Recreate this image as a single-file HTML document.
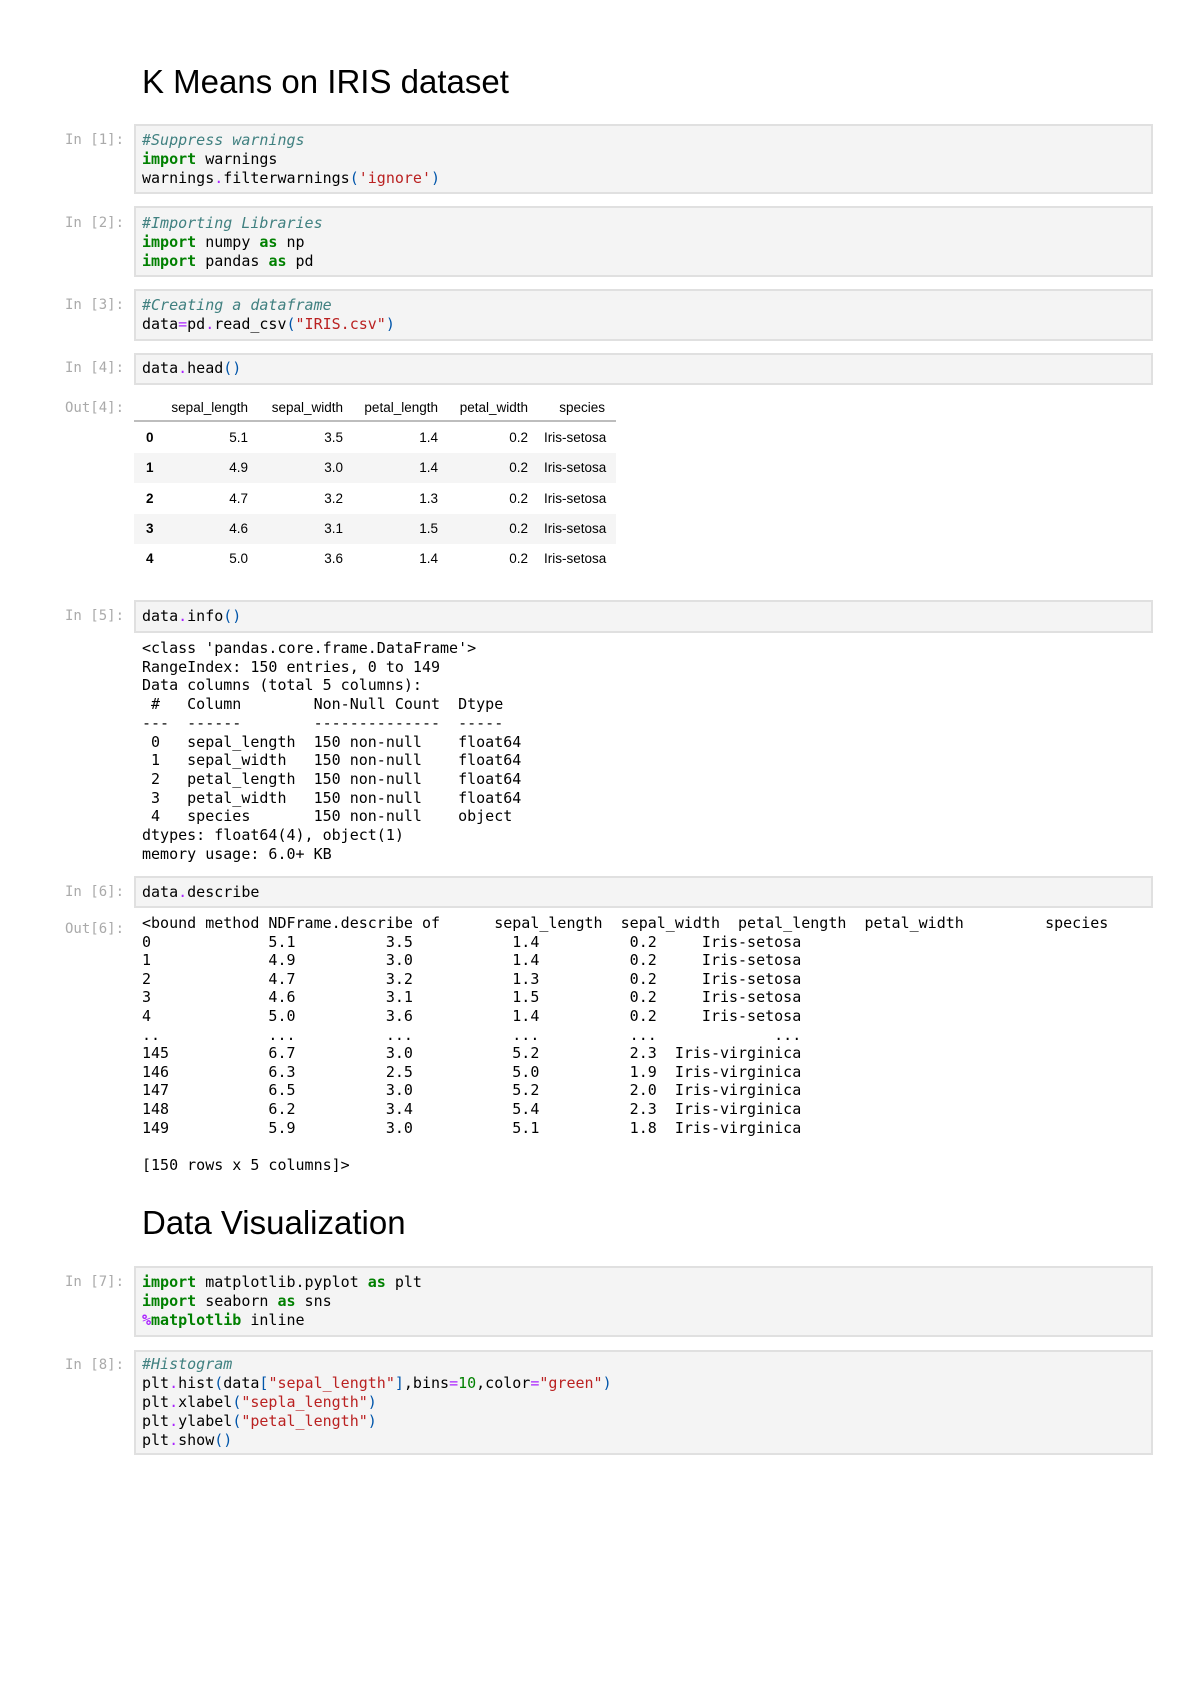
<!DOCTYPE html>
<html><head><meta charset="utf-8"><style>
body{margin:0;width:1200px;height:1698px;background:#fff;position:relative;overflow:hidden}
.h{position:absolute;left:142px;font-family:"Liberation Sans",sans-serif;font-size:33px;color:#000;margin:0;font-weight:normal;line-height:40px}
.cell{position:absolute;left:134px;width:1019px;background:#f4f4f4;border:2px solid #e0e0e0;box-sizing:border-box}
pre{margin:0;font-family:"DejaVu Sans Mono","Liberation Mono",monospace;font-size:15px;line-height:19px;color:#000}
.code{position:absolute;left:142px}
.lbl{position:absolute;left:65px;font-family:"DejaVu Sans Mono",monospace;font-size:14px;color:#aaa;line-height:19px}
.c{color:#408080;font-style:italic}.k{color:#008000;font-weight:bold}.s{color:#ba2121}.o{color:#aa22ff}.p{color:#0055aa}.n{color:#008000}.m{color:#aa22ff;font-weight:bold}
.t{position:absolute;font-family:"Liberation Sans",sans-serif;font-size:13.5px;color:#000;line-height:16px}
.r{text-align:right}
.stripe{position:absolute;left:134px;width:482px;height:30px;background:#f5f5f5}
</style></head><body>

<div class="h" style="top:62px">K Means on IRIS dataset</div>

<div class="lbl" style="top:131px">In [1]:</div>
<div class="cell" style="top:124px;height:70px"></div>
<pre class="code" style="top:131px"><span class="c">#Suppress warnings</span>
<span class="k">import</span> warnings
warnings<span class="o">.</span>filterwarnings<span class="p">(</span><span class="s">'ignore'</span><span class="p">)</span></pre>

<div class="lbl" style="top:214px">In [2]:</div>
<div class="cell" style="top:206px;height:71px"></div>
<pre class="code" style="top:214px"><span class="c">#Importing Libraries</span>
<span class="k">import</span> numpy <span class="k">as</span> np
<span class="k">import</span> pandas <span class="k">as</span> pd</pre>

<div class="lbl" style="top:296px">In [3]:</div>
<div class="cell" style="top:289px;height:52px"></div>
<pre class="code" style="top:296px"><span class="c">#Creating a dataframe</span>
data<span class="o">=</span>pd<span class="o">.</span>read_csv<span class="p">(</span><span class="s">"IRIS.csv"</span><span class="p">)</span></pre>

<div class="lbl" style="top:359px">In [4]:</div>
<div class="cell" style="top:353px;height:32px"></div>
<pre class="code" style="top:359px">data<span class="o">.</span>head<span class="p">()</span></pre>

<div class="lbl" style="top:399px">Out[4]:</div>
<div style="position:absolute;left:134px;top:420px;width:482px;height:2px;background:#bdbdbd"></div>
<div class="stripe" style="top:453px"></div>
<div class="stripe" style="top:514px"></div>
<div class="t r" style="top:400px;left:140px;width:108px">sepal_length</div>
<div class="t r" style="top:400px;left:240px;width:103px">sepal_width</div>
<div class="t r" style="top:400px;left:330px;width:108px">petal_length</div>
<div class="t r" style="top:400px;left:430px;width:98px">petal_width</div>
<div class="t r" style="top:400px;left:530px;width:75px">species</div>

<div class="t" style="top:430px;left:146px;font-weight:bold">0</div>
<div class="t r" style="top:430px;left:200px;width:48px">5.1</div><div class="t r" style="top:430px;left:300px;width:43px">3.5</div><div class="t r" style="top:430px;left:390px;width:48px">1.4</div><div class="t r" style="top:430px;left:480px;width:48px">0.2</div><div class="t" style="top:430px;left:544px">Iris-setosa</div>
<div class="t" style="top:460px;left:146px;font-weight:bold">1</div>
<div class="t r" style="top:460px;left:200px;width:48px">4.9</div><div class="t r" style="top:460px;left:300px;width:43px">3.0</div><div class="t r" style="top:460px;left:390px;width:48px">1.4</div><div class="t r" style="top:460px;left:480px;width:48px">0.2</div><div class="t" style="top:460px;left:544px">Iris-setosa</div>
<div class="t" style="top:491px;left:146px;font-weight:bold">2</div>
<div class="t r" style="top:491px;left:200px;width:48px">4.7</div><div class="t r" style="top:491px;left:300px;width:43px">3.2</div><div class="t r" style="top:491px;left:390px;width:48px">1.3</div><div class="t r" style="top:491px;left:480px;width:48px">0.2</div><div class="t" style="top:491px;left:544px">Iris-setosa</div>
<div class="t" style="top:521px;left:146px;font-weight:bold">3</div>
<div class="t r" style="top:521px;left:200px;width:48px">4.6</div><div class="t r" style="top:521px;left:300px;width:43px">3.1</div><div class="t r" style="top:521px;left:390px;width:48px">1.5</div><div class="t r" style="top:521px;left:480px;width:48px">0.2</div><div class="t" style="top:521px;left:544px">Iris-setosa</div>
<div class="t" style="top:551px;left:146px;font-weight:bold">4</div>
<div class="t r" style="top:551px;left:200px;width:48px">5.0</div><div class="t r" style="top:551px;left:300px;width:43px">3.6</div><div class="t r" style="top:551px;left:390px;width:48px">1.4</div><div class="t r" style="top:551px;left:480px;width:48px">0.2</div><div class="t" style="top:551px;left:544px">Iris-setosa</div>

<div class="lbl" style="top:607px">In [5]:</div>
<div class="cell" style="top:600px;height:33px"></div>
<pre class="code" style="top:607px">data<span class="o">.</span>info<span class="p">()</span></pre>

<pre class="code" style="top:639px;line-height:18.7px">&lt;class 'pandas.core.frame.DataFrame'&gt;
RangeIndex: 150 entries, 0 to 149
Data columns (total 5 columns):
 #   Column        Non-Null Count  Dtype  
---  ------        --------------  -----  
 0   sepal_length  150 non-null    float64
 1   sepal_width   150 non-null    float64
 2   petal_length  150 non-null    float64
 3   petal_width   150 non-null    float64
 4   species       150 non-null    object 
dtypes: float64(4), object(1)
memory usage: 6.0+ KB</pre>

<div class="lbl" style="top:883px">In [6]:</div>
<div class="cell" style="top:876px;height:32px"></div>
<pre class="code" style="top:883px">data<span class="o">.</span>describe</pre>

<div class="lbl" style="top:920px">Out[6]:</div>
<pre class="code" style="top:914px;line-height:18.6px">&lt;bound method NDFrame.describe of      sepal_length  sepal_width  petal_length  petal_width         species
0             5.1          3.5           1.4          0.2     Iris-setosa
1             4.9          3.0           1.4          0.2     Iris-setosa
2             4.7          3.2           1.3          0.2     Iris-setosa
3             4.6          3.1           1.5          0.2     Iris-setosa
4             5.0          3.6           1.4          0.2     Iris-setosa
..            ...          ...           ...          ...             ...
145           6.7          3.0           5.2          2.3  Iris-virginica
146           6.3          2.5           5.0          1.9  Iris-virginica
147           6.5          3.0           5.2          2.0  Iris-virginica
148           6.2          3.4           5.4          2.3  Iris-virginica
149           5.9          3.0           5.1          1.8  Iris-virginica

[150 rows x 5 columns]&gt;</pre>

<div class="h" style="top:1203px">Data Visualization</div>

<div class="lbl" style="top:1273px">In [7]:</div>
<div class="cell" style="top:1266px;height:71px"></div>
<pre class="code" style="top:1273px"><span class="k">import</span> matplotlib.pyplot <span class="k">as</span> plt
<span class="k">import</span> seaborn <span class="k">as</span> sns
<span class="m">%</span><span class="k">matplotlib</span> inline</pre>

<div class="lbl" style="top:1356px">In [8]:</div>
<div class="cell" style="top:1350px;height:105px"></div>
<pre class="code" style="top:1355px"><span class="c">#Histogram</span>
plt<span class="o">.</span>hist<span class="p">(</span>data<span class="p">[</span><span class="s">"sepal_length"</span><span class="p">]</span>,bins<span class="o">=</span><span class="n">10</span>,color<span class="o">=</span><span class="s">"green"</span><span class="p">)</span>
plt<span class="o">.</span>xlabel<span class="p">(</span><span class="s">"sepla_length"</span><span class="p">)</span>
plt<span class="o">.</span>ylabel<span class="p">(</span><span class="s">"petal_length"</span><span class="p">)</span>
plt<span class="o">.</span>show<span class="p">()</span></pre>

</body></html>
